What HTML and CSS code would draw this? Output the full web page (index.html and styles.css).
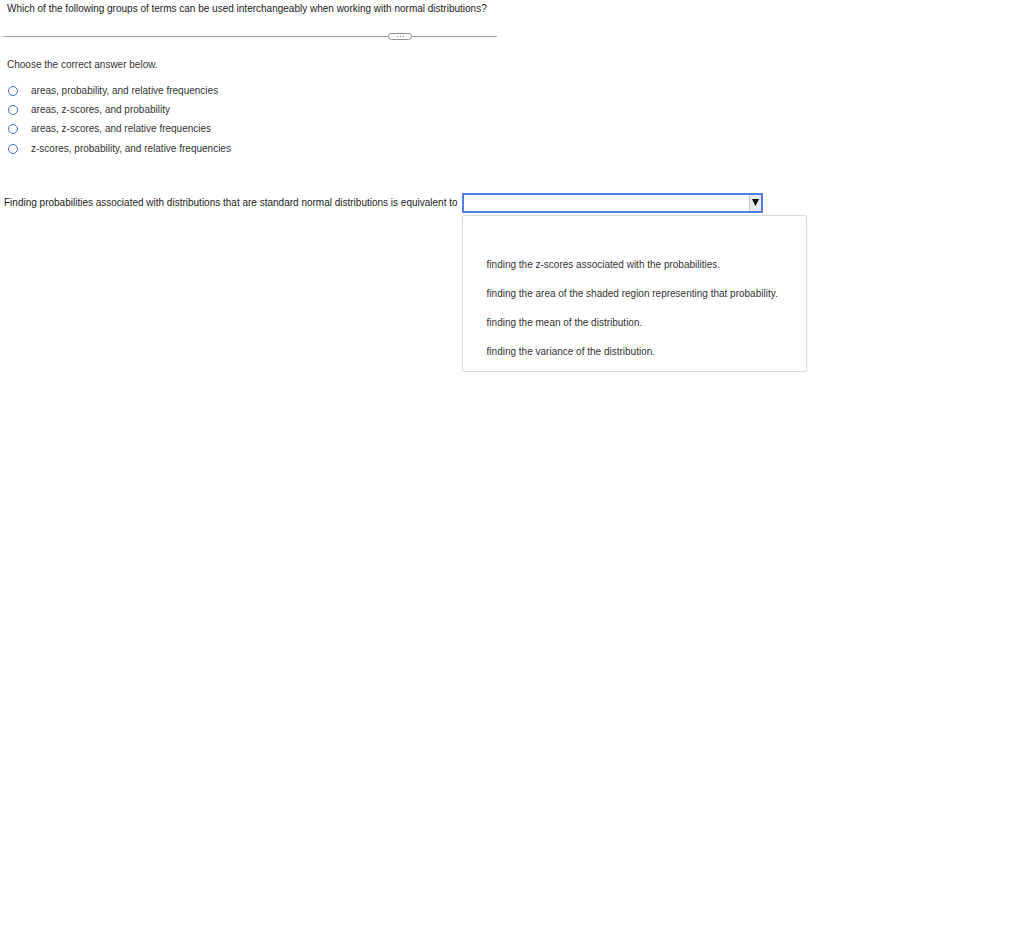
FILE: index.html
```html
<!DOCTYPE html>
<html>
<head>
<meta charset="utf-8">
<link rel="stylesheet" href="styles.css">
</head>
<body>
<div class="page">
  <p class="question">Which of the following groups of terms can be used interchangeably when working with normal distributions?</p>
  <div class="divider">
    <span class="line line-left"></span>
    <span class="pill"><span class="dot"></span><span class="dot"></span><span class="dot"></span></span>
    <span class="line line-right"></span>
  </div>
  <p class="instruction">Choose the correct answer below.</p>
  <ul class="choices">
    <li class="choice"><span class="radio"></span><span class="label">areas, probability, and relative frequencies</span></li>
    <li class="choice"><span class="radio"></span><span class="label">areas, z-scores, and probability</span></li>
    <li class="choice"><span class="radio"></span><span class="label">areas, z-scores, and relative frequencies</span></li>
    <li class="choice"><span class="radio"></span><span class="label">z-scores, probability, and relative frequencies</span></li>
  </ul>
  <div class="fill-row">
    <span class="fill-text">Finding probabilities associated with distributions that are standard normal distributions is equivalent to</span>
    <div class="select-wrap">
      <div class="select">
        <span class="arrow"><svg width="7" height="7" viewBox="0 0 7 7"><path d="M0 0 H7 L3.5 7 Z" fill="#000"/></svg></span>
      </div>
      <div class="menu">
        <div class="option blank"></div>
        <div class="option">finding the z-scores associated with the probabilities.</div>
        <div class="option">finding the area of the shaded region representing that probability.</div>
        <div class="option">finding the mean of the distribution.</div>
        <div class="option">finding the variance of the distribution.</div>
      </div>
    </div>
  </div>
</div>
</body>
</html>
```
FILE: styles.css
```css
html, body {
  margin: 0;
  padding: 0;
  background: #fff;
}
body {
  font-family: "Liberation Sans", Arial, sans-serif;
  font-size: 10px;
  color: #333;
}
.page {
  width: 1024px;
}
.question {
  margin: 0;
  padding: 3px 0 0 7px;
  line-height: 12px;
  color: #222;
}
.divider {
  display: flex;
  align-items: center;
  margin: 17px 0 0 3px;
  width: 494px;
  height: 8px;
}
.line {
  height: 1px;
  background: #9da3b0;
}
.line-left {
  width: 385px;
}
.line-right {
  flex: 1;
}
.pill {
  width: 22px;
  height: 5px;
  border: 1px solid #8a909c;
  border-radius: 4px;
  display: flex;
  align-items: center;
  justify-content: center;
  gap: 2px;
}
.dot {
  width: 1px;
  height: 1px;
  background: #777;
}
.instruction {
  margin: 19px 0 0 7px;
  line-height: 12px;
}
.choices {
  list-style: none;
  margin: 10px 0 0 0;
  padding: 0;
}
.choice {
  display: flex;
  align-items: center;
  height: 19.4px;
  padding-left: 8px;
}
.radio {
  width: 8px;
  height: 8px;
  border: 1.3px solid #3f73c8;
  border-radius: 50%;
  flex: none;
}
.label {
  margin-left: 13px;
  line-height: 12px;
}
.fill-row {
  display: flex;
  align-items: flex-start;
  margin-top: 34px;
  padding-left: 4px;
}
.fill-text {
  line-height: 12px;
  margin-top: 4px;
  color: #222;
}
.select-wrap {
  margin-left: 4px;
  display: flex;
  flex-direction: column;
}
.select {
  width: 297px;
  height: 16px;
  border: 2px solid #4f7fe0;
  display: flex;
  justify-content: flex-end;
  align-items: center;
}
.arrow {
  width: 11px;
  height: 16px;
  background: #e9e9e9;
  border-left: 1px solid #c8c8c8;
  display: flex;
  align-items: center;
  justify-content: center;
}
.menu {
  margin-top: 2px;
  margin-left: 0;
  width: 343px;
  border: 1px solid #dcdcdc;
  border-radius: 3px;
  box-shadow: 0 1px 2px rgba(0,0,0,0.08);
  padding: 0 0 4px 0;
  background: #fff;
}
.option {
  height: 29.3px;
  line-height: 29.3px;
  padding-left: 24px;
  color: #333;
  white-space: nowrap;
}
.option.blank {
  height: 34px;
}
```
